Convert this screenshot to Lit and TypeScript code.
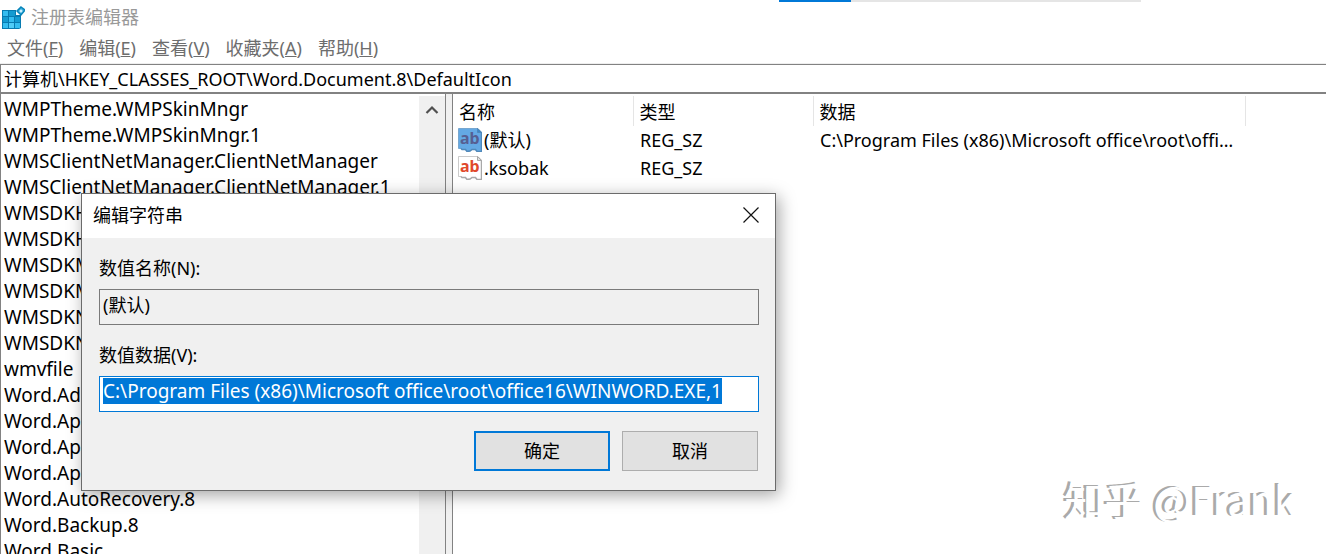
import { LitElement, html, css, svg } from "lit";
import { customElement, property, query } from "lit/decorators.js";

interface RegistryValue {
  name: string;
  type: string;
  data: string;
  selected: boolean;
}

const MENUS = [
  { label: "文件", key: "F" },
  { label: "编辑", key: "E" },
  { label: "查看", key: "V" },
  { label: "收藏夹", key: "A" },
  { label: "帮助", key: "H" },
];

const KEYS = [
  "WMPTheme.WMPSkinMngr",
  "WMPTheme.WMPSkinMngr.1",
  "WMSClientNetManager.ClientNetManager",
  "WMSClientNetManager.ClientNetManager.1",
  "WMSDKH",
  "WMSDKH",
  "WMSDKM",
  "WMSDKM",
  "WMSDKN",
  "WMSDKN",
  "wmvfile",
  "Word.Ad",
  "Word.Ap",
  "Word.Ap",
  "Word.Ap",
  "Word.AutoRecovery.8",
  "Word.Backup.8",
  "Word.Basic",
];

const VALUES: RegistryValue[] = [
  { name: "(默认)", type: "REG_SZ", data: "C:\\Program Files (x86)\\Microsoft office\\root\\office16\\WINWORD.EXE,1", selected: true },
  { name: ".ksobak", type: "REG_SZ", data: "", selected: false },
];

@customElement("value-icon")
class ValueIcon extends LitElement {
  @property({ type: Boolean }) selected = false;

  static styles = css`
    :host { display: block; flex: none; }
    svg { display: block; }
    .letters { font: bold 16px/20px "Noto Sans", sans-serif; }
  `;

  render() {
    const paper = this.selected ? "#64a9e4" : "#ffffff";
    const fold = this.selected ? "#3c86c8" : "#e2e2e2";
    const edge = this.selected ? "#5089ba" : "#a9a9a9";
    const ink = this.selected ? "#565f92" : "#e0492b";
    return html`<svg width="24" height="24" viewBox="0 0 24 24" aria-hidden="true">
      ${svg`
        <path d="M.5 .5H20L23.5 4V23.5H19L17.5 21.5H14L12 23L9 23.5L7.5 21.5H4L3 20.5H.5Z" fill=${paper} stroke=${edge} stroke-opacity=".6"/>
        <path d="M23.5 4V23.5H19L17.5 21.5H14L12 23L9 23.5L7.5 21.5H4L3 20.5" fill="none" stroke=${edge} stroke-width="1.5"/>
        <path d="M19.5 .5V4.5H23.5Z" fill=${fold} stroke=${edge}/>
        <text class="letters" x="2" y="16" fill=${ink}>ab</text>`}
    </svg>`;
  }
}

@customElement("app-root")
class AppRoot extends LitElement {
  @query("#value-data") dataInput!: HTMLInputElement;

  static styles = css`
    :host {
      display: flex;
      flex-direction: column;
      position: relative;
      height: 100vh;
      overflow: hidden;
      background: #fff;
      color: #000;
      font: 18px/26px "Noto Sans", "Noto Sans CJK SC", sans-serif;
    }
    * { box-sizing: border-box; }
    button, input { font: inherit; color: inherit; border-radius: 0; margin: 0; }

    .progress { flex: none; display: grid; grid-template-columns: 779fr 72fr 290fr 185fr; height: 2px; }
    .done { grid-column: 2; background: #0078d7; }
    .rest { background: #e5e5e5; }

    .titlebar { flex: none; display: flex; align-items: center; gap: 6px; height: 32px; padding: 0 0 2px 1px; color: #999; }
    h1, h2 { margin: 0; font-size: 18px; font-weight: 400; }
    .menubar { flex: none; display: flex; gap: 16px; height: 30px; padding-left: 7px; }
    .menu { border: 0; padding: 0; background: none; color: #6d6d6d; height: 28px; }

    .address { flex: none; width: 100%; height: 30px; padding: 0 3px 2px; border: 1px solid #828282; border-right: 0; border-bottom-width: 2px; outline: 0; background: #fff; box-shadow: 0 -1px #eee; }

    .split { flex: 1; min-height: 0; display: flex; background: #f0f0f0; }
    .tree { flex: none; display: flex; width: 446px; border: solid #828282; border-width: 0 1px; background: #fff; overflow: hidden; }
    .keys { flex: 1; min-width: 0; margin: 0; padding: 2px 0 0 3px; list-style: none; white-space: nowrap; font-size: 19px; }
    .scroll { flex: none; width: 26px; margin-top: 2px; background: #f0f0f0; }
    .scroll-up { display: flex; justify-content: center; align-items: center; width: 26px; height: 28px; border: 0; padding: 0; background: none; }
    .values { flex: 1; min-width: 0; margin-left: 6px; border-left: 1px solid #828282; background: #fff; padding-top: 2px; }

    table { width: 100%; border-collapse: collapse; table-layout: fixed; }
    .narrow { width: 180px; }
    .wide { width: 432px; }
    th, td { padding: 0 7px; font-weight: 400; text-align: left; white-space: nowrap; height: 28px; }
    th { height: 30px; padding: 2px 6px 0; border-right: 1px solid #e5e5e5; }
    th:last-child { border-right: 0; }
    td:first-child { padding-left: 5px; }
    .data { overflow: hidden; text-overflow: ellipsis; }
    .entry { display: flex; align-items: center; gap: 2px; }

    .dialog { position: absolute; left: 81px; top: 193px; width: 695px; border: 1px solid #6b6b6b; background: #f0f0f0; box-shadow: 3px 4px 16px rgba(0, 0, 0, .36); }
    .dialog-title { display: flex; justify-content: space-between; align-items: center; height: 44px; padding: 0 16px 2px 11px; background: #fff; }
    .close { display: flex; border: 0; padding: 0; background: none; }
    .fields { display: flex; flex-direction: column; padding: 17px 16px 19px 17px; }
    .field-label { height: 26px; margin-bottom: 8px; }
    .field { width: 100%; height: 36px; padding: 2px 3px 8px; border: 1px solid #7a7a7a; outline: 0; background: #fff; line-height: 24px; caret-color: transparent; }
    .field[readonly] { background: #f0f0f0; margin-bottom: 17px; }
    .field.active { border-color: #0078d7; font-size: 19px; }
    .field::selection { background: #0078d7; color: #fff; }
    .actions { display: flex; justify-content: flex-end; gap: 12px; margin-top: 19px; padding-right: 1px; }
    .action { width: 136px; height: 40px; padding: 0; border: 1px solid #adadad; background: #e1e1e1; }
    .action.primary { border: 2px solid #0078d7; }

    .watermark { position: absolute; right: 30px; bottom: 25px; margin: 0; font: 400 40px/60px "Noto Sans CJK SC", sans-serif; color: #fff; text-shadow: -3px -1px #aaa; }
  `;

  firstUpdated() {
    this.dataInput.focus();
    this.dataInput.select();
  }

  render() {
    return html`
      <div class="progress"><span class="done"></span><span class="rest"></span></div>
      <header class="titlebar">
        <svg width="24" height="26" viewBox="0 0 24 26" aria-hidden="true">
          <path d="M1 6H15V11H20V24L18 25H1Z" fill="#087bb1"/>
          <path d="M2 7h5v5H2zM8 13h5v5H8zM2 19h5v5H2zM14 19h5v5h-5z" fill="#35bdf0"/>
          <path d="M8 7h6v5H8zM2 13h5v5H2zM14 13h5v5h-5z" fill="#149bd1"/>
          <path d="M8 19h5v5H8z" fill="#50ccf7"/>
          <path d="M20 3L24 6L20 11L16 7Z" fill="#3aaede" stroke="#0785ba" stroke-width="1.5"/>
          <circle cx="20" cy="7" r="1.5" fill="#c7efff"/>
        </svg>
        <h1>注册表编辑器</h1>
      </header>
      <nav class="menubar">
        ${MENUS.map((m) => html`<button class="menu">${m.label}(<u>${m.key}</u>)</button>`)}
      </nav>
      <input class="address" aria-label="地址" .value=${"计算机\\HKEY_CLASSES_ROOT\\Word.Document.8\\DefaultIcon"} />
      <main class="split">
        <section class="tree">
          <ul class="keys">${KEYS.map((k) => html`<li>${k}</li>`)}</ul>
          <div class="scroll">
            <button class="scroll-up" aria-label="向上滚动">
              <svg width="14" height="10" viewBox="0 0 14 10"><path d="M1.5 8L7 2.5L12.5 8" fill="none" stroke="#505050" stroke-width="2.2"/></svg>
            </button>
          </div>
        </section>
        <section class="values">
          <table>
            <colgroup><col class="narrow" /><col class="narrow" /><col class="wide" /><col /></colgroup>
            <thead><tr><th>名称</th><th>类型</th><th>数据</th><th></th></tr></thead>
            <tbody>
              ${VALUES.map((v) => html`<tr>
                <td><div class="entry"><value-icon ?selected=${v.selected}></value-icon>${v.name}</div></td>
                <td>${v.type}</td><td class="data">${v.data}</td><td></td>
              </tr>`)}
            </tbody>
          </table>
        </section>
      </main>
      <p class="watermark">知乎 @Frank</p>
      <section class="dialog" role="dialog" aria-labelledby="dialog-title">
        <header class="dialog-title">
          <h2 id="dialog-title">编辑字符串</h2>
          <button class="close" aria-label="关闭">
            <svg width="16" height="16" viewBox="0 0 16 16"><path d="M.5 .5L15.5 15.5M15.5 .5L.5 15.5" stroke="#111" stroke-width="1.2"/></svg>
          </button>
        </header>
        <form class="fields" @submit=${(e: Event) => e.preventDefault()}>
          <label class="field-label" for="value-name">数值名称(N):</label>
          <input class="field" id="value-name" readonly .value=${"(默认)"} />
          <label class="field-label" for="value-data">数值数据(V):</label>
          <input class="field active" id="value-data" .value=${VALUES[0].data} />
          <div class="actions">
            <button class="action primary" type="submit">确定</button>
            <button class="action" type="button">取消</button>
          </div>
        </form>
      </section>
    `;
  }
}
